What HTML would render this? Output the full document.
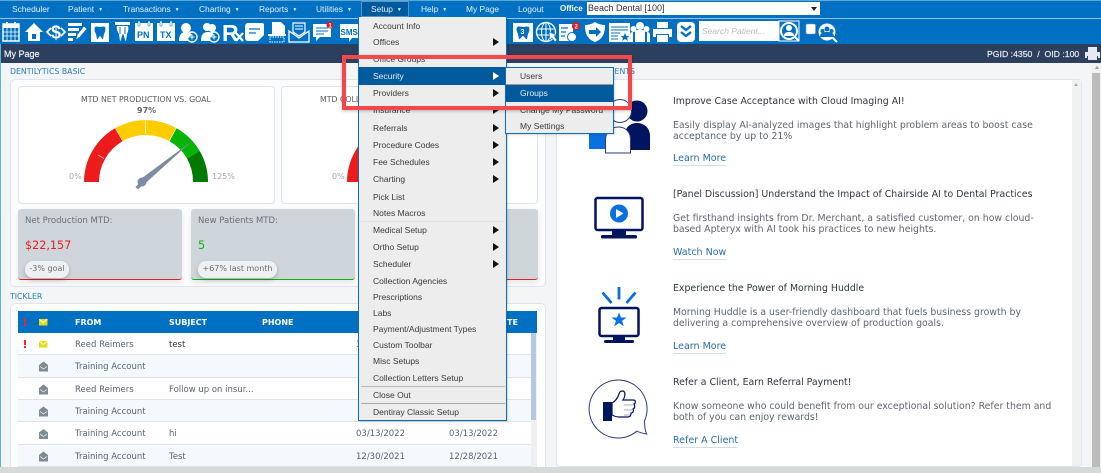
<!DOCTYPE html>
<html><head><meta charset="utf-8"><title>My Page</title>
<style>
html,body{margin:0;padding:0}
body{width:1101px;height:473px;overflow:hidden;position:relative;background:#f4f5f7;font-family:"Liberation Sans",sans-serif}
.a{position:absolute;white-space:nowrap}
.m{font-family:"DejaVu Sans",sans-serif}
.nav{position:absolute;top:2px;height:14px;line-height:14px;font-size:8.4px;color:#e6f0f8;white-space:nowrap}
.nav i{font-style:normal;font-size:5px;margin-left:4px;vertical-align:1px}
.card{position:absolute;background:#fff;border:1px solid #e1e4ee;border-radius:4px;box-sizing:border-box}
.stat{position:absolute;top:209px;height:71px;background:#ced5db;border-radius:3px;box-sizing:border-box;border-bottom:1px solid #e02020;box-shadow:0 3px 6px rgba(0,0,0,.08)}
.pill{position:absolute;background:#eef0f1;border-radius:8px;height:17px;line-height:16px;font-size:8px;color:#6d6d6d;text-align:center;box-shadow:0 2px 4px rgba(0,0,0,.2);font-family:"DejaVu Sans",sans-serif}
.row{position:absolute;left:18px;width:513px;font-family:"DejaVu Sans",sans-serif;font-size:8.5px;color:#5a6270;border-bottom:1px solid #dfe4ea;box-sizing:border-box}
.row span{position:absolute;top:7px;white-space:nowrap}
.mi{position:absolute;left:373px;font-size:8.5px;line-height:12px;color:#3a3a3a;white-space:nowrap}
.ar{position:absolute;left:493px;width:0;height:0;border-left:6px solid #111;border-top:4px solid transparent;border-bottom:4px solid transparent}
.t{position:absolute;left:673px;font-family:"DejaVu Sans",sans-serif;font-size:9.4px;color:#2f3542;white-space:nowrap;line-height:12px}
.d{position:absolute;left:673px;font-family:"DejaVu Sans",sans-serif;font-size:9.35px;color:#5f6672;white-space:nowrap;line-height:11px}
.l{position:absolute;left:673px;font-family:"DejaVu Sans",sans-serif;font-size:9.5px;color:#2a6ea8;white-space:nowrap;line-height:12px;border-bottom:1px solid #cfe0ee}
</style></head><body>

<!-- header bars -->
<div class="a" style="left:0;top:0;width:1101px;height:1px;background:#5fa8d0"></div>
<div class="a" style="left:0;top:1px;width:1101px;height:17px;background:#0071c2"></div>
<div class="a" style="left:0;top:18px;width:1101px;height:1px;background:#9cc3de"></div>
<div class="a" style="left:0;top:19px;width:1101px;height:25px;background:#0071c2"></div>
<div class="a" style="left:0;top:44px;width:1101px;height:19px;background:#2c3f5e"></div>
<div class="a" style="left:0;top:44px;width:1px;height:429px;background:#54b9d6"></div>

<div class="nav" style="left:12px">Scheduler</div>
<div class="nav" style="left:68px">Patient<i>▼</i></div>
<div class="nav" style="left:123px">Transactions<i>▼</i></div>
<div class="nav" style="left:199px">Charting<i>▼</i></div>
<div class="nav" style="left:259px">Reports<i>▼</i></div>
<div class="nav" style="left:316px">Utilities<i>▼</i></div>
<div class="a" style="left:361px;top:1px;width:48px;height:16px;background:#005a9c;border:1px solid #4d9ad0;box-sizing:border-box"></div>
<div class="nav" style="left:371px">Setup<i>▼</i></div>
<div class="nav" style="left:421px">Help<i>▼</i></div>
<div class="nav" style="left:466px">My Page</div>
<div class="nav" style="left:518px">Logout</div>
<div class="nav" style="left:560px;font-weight:bold;color:#fff;font-size:8px">Office</div>
<div class="a" style="left:587px;top:2px;width:233px;height:13px;background:#fff;font-size:9px;line-height:13px;color:#333;padding-left:1px;box-sizing:border-box">Beach Dental [100]</div>
<div class="a" style="left:811px;top:7px;width:0;height:0;border-top:4px solid #222;border-left:3px solid transparent;border-right:3px solid transparent"></div>

<!-- toolbar icons -->
<svg class="a" style="left:0;top:19px" width="1101" height="25" viewBox="0 19 1101 25">
<g fill="#fff" stroke="none">
<!-- calendar -->
<path d="M3 24h16v17H3z" fill="none" stroke="#fff" stroke-width="1.4"/><path d="M3 24h16v4H3zM6 22h2v4H6zM14 22h2v4h-2z"/><path d="M3 32h16M3 36h16M7 28v13M11 28v13M15 28v13" stroke="#fff" stroke-width=".8" fill="none"/>
<!-- home -->
<path d="M34 23l9 9h-3v9H28v-9h-3z"/><path d="M32 34h4v5h-4z" fill="#0071c2"/>
<!-- dollar diamond -->
<path d="M51 28l-4 4 4 4M61 28l4 4-4 4" fill="none" stroke="#fff" stroke-width="1.800"/>
<text x="51" y="38.500" font-family="Liberation Sans" font-weight="bold" font-size="18">$</text>
<!-- edit -->
<path d="M68 23h14v3H68zM68 28h11v3H68zM68 33h8v3H68zM68 38h5v3h-5z"/><path d="M76 40l1-5 7-9 3 3-7 8z" stroke="#0071c2" stroke-width=".6"/>
<!-- tooth card -->
<path d="M91 23h18v19H91z"/><path d="M95 27c2-1 3 0 5 0s3-1 5 0c1 3 0 5-1 7l-1 5c-1 1-2-3-3-3s-2 4-3 3l-1-5c-1-2-2-4-1-7z" fill="#0071c2"/>
<!-- tooth 2 -->
<path d="M115 22h15v3h-15z"/><path d="M117 26h11c1 3 0 6-1 8l-1 7c-1 1-2-7-3-7s-2 8-3 7l-1-7c-1-2-3-5-2-8z"/><path d="M120 27v7M125 27v7" stroke="#0071c2"/>
<!-- PN -->
<path d="M135 23h18v18h-18z"/><path d="M138 21h2v5h-2zM148 21h2v5h-2z" stroke="#0071c2" stroke-width=".5"/>
<text x="137" y="38" font-family="Liberation Sans" font-weight="bold" font-size="9" fill="#0071c2">PN</text>
<!-- TX -->
<path d="M157 23h18v18h-18z"/><path d="M160 21h2v5h-2zM170 21h2v5h-2z" stroke="#0071c2" stroke-width=".5"/>
<text x="160" y="38" font-family="Liberation Sans" font-weight="bold" font-size="9" fill="#0071c2">TX</text>
<!-- user plus -->
<circle cx="186" cy="28" r="5"/><path d="M179 41c0-7 3-9 7-9 3 0 5 1 6 3-3 1-4 3-4 6z"/><circle cx="192" cy="37" r="5" fill="none" stroke="#fff" stroke-width="1.400"/><path d="M189.500 37h5M192 34.500v5" stroke="#fff"/>
<!-- users plus -->
<circle cx="207" cy="27" r="4"/><circle cx="212" cy="28" r="4"/><path d="M201 41c0-7 3-9 7-9 3 0 5 1 6 3-3 1-4 3-4 6z"/><circle cx="214" cy="37" r="5" fill="none" stroke="#fff" stroke-width="1.400"/><path d="M211.500 37h5M214 34.500v5" stroke="#fff"/>
<!-- Rx -->
<text x="222" y="41" font-family="Liberation Sans" font-weight="bold" font-size="23">R</text><path d="M236 33l7 8M243 33l-7 8" stroke="#fff" stroke-width="2.200"/>
<!-- note -->
<path d="M248 23h14a2 2 0 0 1 2 2v10l-6 6h-10a3 3 0 0 1-3-3V26a3 3 0 0 1 3-3z"/><path d="M249 29h11M249 33h7" stroke="#0071c2" stroke-width="1.200"/>
<!-- scan doc -->
<path d="M272 22h9l4 4v8h-13z"/><path d="M268 34h18v2h-18z"/><path d="M270 37h14v5h-14z" fill="none" stroke="#fff" stroke-dasharray="1.500 1"/>
<!-- mail -->
<path d="M293 23h12v9l-6 4-6-4z" fill="none" stroke="#fff" stroke-width="1.200"/><path d="M295 26h8M295 29h8" stroke="#fff"/><path d="M289 31v11h20V31l-10 7z" fill="none" stroke="#fff" stroke-width="1.300"/>
<!-- chat -->
<path d="M313 24h18v13h-11l-4 4v-4h-3z"/><path d="M316 28h12M316 31h12M316 34h8" stroke="#0071c2"/>
<circle cx="330" cy="25" r="3.500" fill="#e01b24"/>
<!-- SMS -->
<path d="M340 24h18v14h-6l-3 4v-4h-9z"/>
<text x="340.500" y="35" font-family="Liberation Sans" font-weight="bold" font-size="8" fill="#0071c2">SMS</text>
<!-- tooth 3 -->
<path d="M513 23h20v19h-20z"/><path d="M517 27c2-1 4 0 6 0s4-1 6 0c1 3 0 5-1 7l-1 5c-1 1-3-3-4-3s-3 4-4 3l-1-5c-1-2-2-4-1-7z" fill="#0071c2"/>
<text x="520.500" y="34" font-family="Liberation Sans" font-weight="bold" font-size="7">3</text>
<!-- globe -->
<circle cx="546" cy="32" r="9.500" fill="none" stroke="#fff" stroke-width="1.300"/><ellipse cx="546" cy="32" rx="4.500" ry="9.500" fill="none" stroke="#fff"/><path d="M537 29h18M537 35h18M546 22v20" stroke="#fff" fill="none"/><path d="M549 32l8 3-3 1 3 4-2 2-3-4-2 2z" stroke="#0071c2" stroke-width=".6"/>
<!-- doc badge -->
<path d="M559 24h14v17h-14z"/><path d="M561 28h7M561 32h5M561 36h4" stroke="#0071c2" stroke-width="1.200"/><circle cx="572" cy="37" r="4.500" stroke="#0071c2"/><circle cx="576" cy="26" r="4" fill="#e01b24"/>
<!-- shield -->
<path d="M595 22c3 2 7 3 10 3 0 8-2 14-10 17-8-3-10-9-10-17 3 0 7-1 10-3z"/><path d="M589 30h7v-3l5 5-5 5v-3h-7z" fill="#0071c2"/>
<!-- list star -->
<path d="M609 23h21v19h-21z"/><path d="M611 27h17M611 30h17M611 33h9M611 36h7M611 39h7" stroke="#0071c2"/><path d="M625 33l1.400 3h3l-2.400 2 1 3-3-2-3 2 1-3-2.400-2h3z" fill="#0071c2"/>
<!-- people -->
<circle cx="640" cy="26" r="4"/><circle cx="633.500" cy="29" r="3"/><circle cx="646.500" cy="29" r="3"/><path d="M635 42v-9c0-3 2-3 5-3s5 0 5 3v9zM630 42v-7c0-2 1-3 3-3v10zM650 42v-7c0-2-1-3-3-3v10z"/>
<!-- printer -->
<path d="M657 22h11v6h-11z"/><path d="M653 29h19v8h-3v-3h-13v3h-3z"/><path d="M657 35h11v7h-11z"/>
<!-- chevrons -->
<rect x="677" y="22" width="18" height="20" rx="4"/><path d="M681 26l5 4 5-4M681 32l5 4 5-4" fill="none" stroke="#0071c2" stroke-width="2.400"/>
<!-- search input -->
<rect x="699" y="21" width="80" height="20"/>
<!-- user search -->
<rect x="779" y="21" width="20" height="20" fill="#0071c2" stroke="#fff"/>
<circle cx="789" cy="31" r="8" fill="#0071c2" stroke="#fff" stroke-width="2"/><circle cx="789" cy="28" r="3"/><path d="M784 36c0-3 2-4 5-4s5 1 5 4z"/><path d="M795 37l4 4" stroke="#fff" stroke-width="2"/>
<!-- checkbox -->
<rect x="806" y="24" width="9.500" height="10" rx="1.500" stroke="#999" stroke-width=".6"/>
<!-- group search -->
<circle cx="827" cy="32" r="8.500" fill="#fff"/><circle cx="827" cy="29" r="2.500" fill="#0071c2"/><circle cx="822.500" cy="31" r="2" fill="#0071c2"/><circle cx="831.500" cy="31" r="2" fill="#0071c2"/><path d="M820 37c0-4 3-5 7-5s7 1 7 5z" fill="#0071c2"/><path d="M833 38l4 4" stroke="#fff" stroke-width="2"/>
</g>
<text x="328.500" y="27.500" font-family="Liberation Sans" font-weight="bold" font-size="6" fill="#fff">1</text>
<text x="574.500" y="28.500" font-family="Liberation Sans" font-weight="bold" font-size="6" fill="#fff">2</text>
</svg>
<div class="a" style="left:702px;top:24px;font-size:8.500px;font-style:italic;color:#b9bdc2;line-height:14px">Search Patient...</div>

<div class="a" style="left:4px;top:47px;font-size:9px;color:#eef1f5;line-height:14px;-webkit-text-stroke:.2px #eef1f5">My Page</div>
<div class="a" style="left:987px;top:47px;font-size:8.700px;color:#e6e9ee;line-height:14px;-webkit-text-stroke:.2px #e6e9ee">PGID :4350&nbsp; / &nbsp;OID :100</div>
<svg class="a" style="left:1085px;top:46px" width="16" height="15"><path d="M3 1h9v5H3zM0 6h15v6h-2v-2H2v2H0zM3 10h9v4H3z" fill="#e6e9ee"/></svg>

<!-- scrollbars -->
<div class="a" style="left:1092px;top:63px;width:9px;height:404px;background:#f1f1f1"></div>
<div class="a" style="left:1092px;top:73px;width:8px;height:394px;background:#bcbcbc"></div>
<div class="a" style="left:1095px;top:66px;border-bottom:3px solid #999;border-left:2px solid transparent;border-right:2px solid transparent"></div>

<!-- Dentilytics -->
<div class="a m" style="left:10px;top:67px;font-size:7.800px;line-height:10px;color:#2a7dc0">DENTILYTICS BASIC</div>
<div class="card" style="left:10px;top:79px;width:536px;height:208px;border-radius:5px;background:#fbfcfd"></div>
<div class="card" style="left:18px;top:86px;width:257px;height:118px"></div>
<div class="card" style="left:281px;top:86px;width:257px;height:118px"></div>
<div class="a m" style="left:81px;top:95px;font-size:7.800px;line-height:10px;color:#5a5a5a">MTD NET PRODUCTION VS. GOAL</div>
<div class="a m" style="left:137px;top:106px;font-size:8px;line-height:10px;color:#666;font-weight:bold">97%</div>
<div class="a m" style="left:69px;top:172px;font-size:8px;line-height:10px;color:#aaa">0%</div>
<div class="a m" style="left:212px;top:172px;font-size:8px;line-height:10px;color:#aaa">125%</div>
<div class="a m" style="left:320px;top:95px;font-size:7.800px;line-height:10px;color:#5a5a5a">MTD COLLECTIONS</div>
<div class="a m" style="left:332px;top:172px;font-size:8px;line-height:10px;color:#aaa">0%</div>
<svg class="a" style="left:0;top:80px" width="440" height="120" viewBox="0 80 440 120">
<path d="M84 182A62 62 0 0 1 115 128.300L122.500 141.300A47 47 0 0 0 99 182Z" fill="#ec1c1c"/>
<path d="M115.500 128A62 62 0 0 1 176 128L168.800 141A47 47 0 0 0 122.800 141Z" fill="#ffcc00"/>
<path d="M145.500 120v14" stroke="#fff" stroke-width=".8"/>
<path d="M176.500 128.300A62 62 0 0 1 199.700 151L187 158.500A47 47 0 0 0 169.500 141.300Z" fill="#05b405"/>
<path d="M199.700 151A62 62 0 0 1 208 182H193A47 47 0 0 0 187 158.500Z" fill="#007a00"/>
<path d="M98 155l6 3.500" stroke="#f5b5b5" stroke-width=".8"/>
<path d="M192 141L140 179.500L144 184.500Z" fill="#7d8ca3"/>
<path d="M138.500 184L135.500 187L138 189.500L141 186.500Z" fill="#7d8ca3"/>
<circle cx="142" cy="182" r="4.500" fill="#7d8ca3"/>
<path d="M347 182A62 62 0 0 1 378 128.300L385.500 141.300A47 47 0 0 0 362 182Z" fill="#ec1c1c"/>
</svg>

<div class="stat" style="left:18px;width:164px"></div>
<div class="a m" style="left:25px;top:216px;font-size:8.500px;line-height:11px;color:#66707a">Net Production MTD:</div>
<div class="a m" style="left:25px;top:238px;font-size:11.200px;line-height:15px;color:#ec1c1c">$22,157</div>
<div class="pill" style="left:25px;top:261px;width:44px">-3% goal</div>
<div class="stat" style="left:191px;width:164px;border-bottom-color:#12b012"></div>
<div class="a m" style="left:198px;top:216px;font-size:8.500px;line-height:11px;color:#66707a">New Patients MTD:</div>
<div class="a m" style="left:198px;top:238px;font-size:11.200px;line-height:15px;color:#12b012">5</div>
<div class="pill" style="left:198px;top:261px;width:79px">+67% last month</div>
<div class="stat" style="left:374px;width:164px"></div>

<!-- Tickler -->
<div class="a m" style="left:10px;top:292px;font-size:7.800px;line-height:10px;color:#2a7dc0">TICKLER</div>
<div class="card" style="left:10px;top:303px;width:536px;height:170px;border-radius:5px;border-bottom:0"></div>
<div class="a" style="left:18px;top:311px;width:519px;height:22px;background:#0071c2"></div>
<div class="a" style="left:24px;top:318px;width:2px;height:5px;background:#ff2020"></div>
<div class="a" style="left:24px;top:324px;width:2px;height:2px;background:#ff2020"></div>
<svg class="a" style="left:39px;top:319px" width="9" height="7"><path d="M0 0h8.500v6.500H0z" fill="#e4dc17"/><path d="M0 0l4.200 3.500L8.500 0" fill="none" stroke="#fff" stroke-width=".7"/></svg>
<div class="a m" style="left:75px;top:317px;font-size:8px;line-height:11px;color:#fff;font-weight:bold">FROM</div>
<div class="a m" style="left:169px;top:317px;font-size:8px;line-height:11px;color:#fff;font-weight:bold">SUBJECT</div>
<div class="a m" style="left:262px;top:317px;font-size:8px;line-height:11px;color:#fff;font-weight:bold">PHONE</div>
<div class="a m" style="left:507px;top:317px;font-size:8px;line-height:11px;color:#fff;font-weight:bold">TE</div>

<div class="row" style="top:333px;height:22px;background:#fff"><span style="left:57px">Reed Reimers</span><span style="left:151px;color:#333">test</span><span style="left:338px">1</span></div>
<div class="row" style="top:355px;height:23px;background:#f5f9fd"><span style="left:57px">Training Account</span></div>
<div class="row" style="top:378px;height:22px;background:#fff"><span style="left:57px">Reed Reimers</span><span style="left:151px">Follow up on insur...</span></div>
<div class="row" style="top:400px;height:22px;background:#f5f9fd"><span style="left:57px">Training Account</span></div>
<div class="row" style="top:422px;height:23px;background:#fff"><span style="left:57px">Training Account</span><span style="left:151px">hi</span><span style="left:338px">03/13/2022</span><span style="left:431px">03/13/2022</span></div>
<div class="row" style="top:445px;height:22px;background:#f5f9fd"><span style="left:57px">Training Account</span><span style="left:151px">Test</span><span style="left:338px">12/30/2021</span><span style="left:431px">12/28/2021</span></div>
<div class="a" style="left:24px;top:340px;width:2px;height:5px;background:#ff2020"></div>
<div class="a" style="left:24px;top:346px;width:2px;height:2px;background:#ff2020"></div>
<svg class="a" style="left:39px;top:341px" width="9" height="7"><path d="M0 0h8.500v6.500H0z" fill="#e4dc17"/><path d="M0 0l4.200 3.500L8.500 0" fill="none" stroke="#fff" stroke-width=".7"/></svg>
<svg class="a" style="left:39px;top:0" width="10" height="473">
<g fill="#7f8a93">
<path d="M0 365l4.500-3.500L9 365v6.500H0z"/>
<path d="M0 388l4.500-3.500L9 388v6.500H0zM0 410l4.500-3.500L9 410v6.500H0zM0 432.500l4.500-3.500L9 432.500v6.500H0zM0 455l4.500-3.500L9 455v6.500H0z"/>
</g>
<path d="M1 366.500l3.500 2.500 3.500-2.500M1 389.500l3.500 2.500 3.500-2.500M1 411.500l3.500 2.500 3.500-2.500M1 434l3.500 2.500 3.500-2.500M1 456.500l3.500 2.500 3.500-2.500" fill="none" stroke="#fff" stroke-width=".7"/>
</svg>
<div class="a" style="left:531px;top:333px;width:6px;height:134px;background:#f0f0f0"></div>
<div class="a" style="left:531px;top:333px;width:5px;height:87px;background:#b2cbe0"></div>

<!-- right panel -->
<div class="a m" style="left:536px;top:67px;font-size:7.800px;line-height:10px;color:#2a7dc0;width:99px;text-align:right">ANNOUNCEMENTS</div>
<div class="card" style="left:556px;top:79px;width:526px;height:388px;border-radius:4px"></div>
<div class="a" style="left:1072px;top:80px;width:9px;height:386px;background:#f1f1f1"></div>
<div class="a" style="left:1074px;top:83px;border-bottom:3px solid #aaa;border-left:2px solid transparent;border-right:2px solid transparent"></div>

<div class="t" style="top:96px">Improve Case Acceptance with Cloud Imaging AI!</div>
<div class="d" style="top:120px">Easily display AI-analyzed images that highlight problem areas to boost case</div>
<div class="d" style="top:131px">acceptance by up to 21%</div>
<div class="l" style="top:153px">Learn More</div>
<div class="t" style="top:189px">[Panel Discussion] Understand the Impact of Chairside AI to Dental Practices</div>
<div class="d" style="top:213px">Get firsthand insights from Dr. Merchant, a satisfied customer, on how cloud-</div>
<div class="d" style="top:224px">based Apteryx with AI took his practices to new heights.</div>
<div class="l" style="top:247px">Watch Now</div>
<div class="t" style="top:283px">Experience the Power of Morning Huddle</div>
<div class="d" style="top:307px">Morning Huddle is a user-friendly dashboard that fuels business growth by</div>
<div class="d" style="top:318px">delivering a comprehensive overview of production goals.</div>
<div class="l" style="top:341px">Learn More</div>
<div class="t" style="top:377px">Refer a Client, Earn Referral Payment!</div>
<div class="d" style="top:401px">Know someone who could benefit from our exceptional solution? Refer them and</div>
<div class="d" style="top:412px">both of you can enjoy rewards!</div>
<div class="l" style="top:435px">Refer A Client</div>

<svg class="a" style="left:580px;top:90px" width="80" height="370" viewBox="580 90 80 370">
<!-- people -->
<circle cx="637" cy="111" r="10.500" fill="#00145f"/>
<path d="M625 150v-16c0-7 6-11 12-11s13 4 13 13v14z" fill="#00145f"/>
<circle cx="620" cy="111" r="11.500" fill="#fff" stroke="#2f3a7f"/>
<rect x="589" y="128" width="18" height="21" fill="#0a6fe0"/>
<path d="M605.500 153v-14c0-7 6-12 13-12s12 5 12 12v14z" fill="#fff" stroke="#2f3a7f"/>
<!-- monitor play -->
<rect x="595.500" y="198" width="47" height="32" rx="2" fill="#fff" stroke="#00145f" stroke-width="2.500"/>
<path d="M612 231h14v5h-14z" fill="#00145f"/><rect x="601" y="235" width="36" height="3.500" rx="1.500" fill="#00145f"/>
<circle cx="619" cy="213.500" r="9" fill="#0a6fe0"/><path d="M616 209l7.500 4.500-7.500 4.500z" fill="#fff"/>
<!-- monitor star -->
<rect x="599.500" y="308" width="39" height="28" rx="2" fill="#fff" stroke="#00145f" stroke-width="2.500"/>
<path d="M613 336h12v5h-12z" fill="#00145f"/><rect x="604" y="340" width="30" height="3" rx="1.500" fill="#00145f"/>
<path d="M619 312.500l2 5h5.500l-4.400 3.400 1.700 5.400-4.800-3.300-4.800 3.300 1.700-5.400-4.400-3.400h5.500z" fill="#0a6fe0"/>
<path d="M619 287v12.500M602.500 292.500l9 10.500M635.500 292.500l-9 10.500" stroke="#0a6fe0" stroke-width="2.800" fill="none"/>
<!-- thumb -->
<path d="M646.700 434c-3-.5-6.700-1-9.700-3A29 29 0 1 1 644.500 421c0 4 .2 9 2.200 13z" fill="#fff" stroke="#2f3a7f" stroke-width="1"/>
<rect x="603" y="402" width="9" height="19" fill="#00145f"/>
<path d="M612 403c4-2 6-6 7-9 1-3 2-3 4-3 3 1 2 6 0 9h10c3 0 3 3 1 4 1 2 1 4-1 5 1 2 0 4-2 4 0 3-1 4-3 4h-9c-3 0-5-1-7-2z" fill="#fff" stroke="#00145f" stroke-width="1.200"/>
<path d="M624 405h9M624 410h8M624 415h6" stroke="#8a93b5" stroke-width=".8"/>
</svg>

<!-- bottom strip -->
<div class="a" style="left:0;top:467px;width:1101px;height:6px;background:#d6dbda"></div>

<!-- Setup dropdown -->
<div class="a" style="left:358px;top:17px;width:149px;height:404px;background:#ededed;border:1px solid #0a6cb5;border-top:0;box-sizing:border-box;box-shadow:1px 1px 2px rgba(0,0,0,.15)"></div>
<div class="a" style="left:359px;top:67px;width:147px;height:18px;background:#005a9c"></div>
<div class="a" style="left:361px;top:221px;width:144px;height:1px;background:#e2e2e2"></div>
<div class="a" style="left:361px;top:386px;width:144px;height:1px;background:#bbb"></div>
<div class="a" style="left:361px;top:403px;width:144px;height:1px;background:#aaa"></div>

<div class="mi" style="top:20px">Account Info</div>
<div class="mi" style="top:36px">Offices</div><div class="ar" style="top:38px"></div>
<div class="mi" style="top:53px">Office Groups</div>
<div class="mi" style="top:70px;color:#e8eef4">Security</div><div class="ar" style="top:72px;border-left-color:#fff"></div>
<div class="mi" style="top:87px">Providers</div><div class="ar" style="top:89px"></div>
<div class="mi" style="top:104px">Insurance</div><div class="ar" style="top:106px"></div>
<div class="mi" style="top:122px">Referrals</div><div class="ar" style="top:124px"></div>
<div class="mi" style="top:139px">Procedure Codes</div><div class="ar" style="top:141px"></div>
<div class="mi" style="top:156px">Fee Schedules</div><div class="ar" style="top:158px"></div>
<div class="mi" style="top:173px">Charting</div><div class="ar" style="top:175px"></div>
<div class="mi" style="top:191px">Pick List</div>
<div class="mi" style="top:207px">Notes Macros</div>
<div class="mi" style="top:224px">Medical Setup</div><div class="ar" style="top:226px"></div>
<div class="mi" style="top:241px">Ortho Setup</div><div class="ar" style="top:243px"></div>
<div class="mi" style="top:258px">Scheduler</div><div class="ar" style="top:260px"></div>
<div class="mi" style="top:275px">Collection Agencies</div>
<div class="mi" style="top:291px">Prescriptions</div>
<div class="mi" style="top:307px">Labs</div>
<div class="mi" style="top:323px">Payment/Adjustment Types</div>
<div class="mi" style="top:339px">Custom Toolbar</div>
<div class="mi" style="top:355px">Misc Setups</div>
<div class="mi" style="top:372px">Collection Letters Setup</div>
<div class="mi" style="top:389px">Close Out</div>
<div class="mi" style="top:406px">Dentiray Classic Setup</div>

<!-- Submenu -->
<div class="a" style="left:505px;top:67px;width:109px;height:67px;background:#ededed;border:1px solid #0a6cb5;box-sizing:border-box;box-shadow:1px 1px 2px rgba(0,0,0,.15)"></div>
<div class="a" style="left:506px;top:84px;width:107px;height:1px;background:#999"></div>
<div class="a" style="left:506px;top:85px;width:107px;height:17px;background:#005a9c"></div>
<div class="mi" style="left:520px;top:70px">Users</div>
<div class="mi" style="left:520px;top:87px;color:#e8eef4">Groups</div>
<div class="mi" style="left:520px;top:104px">Change My Password</div>
<div class="mi" style="left:520px;top:120px">My Settings</div>

<!-- Red highlight -->
<div class="a" style="left:342px;top:55px;width:290px;height:55px;border:4.500px solid #f4474c;box-sizing:border-box;box-shadow:0 1px 3px rgba(0,0,0,.25)"></div>
</body></html>
